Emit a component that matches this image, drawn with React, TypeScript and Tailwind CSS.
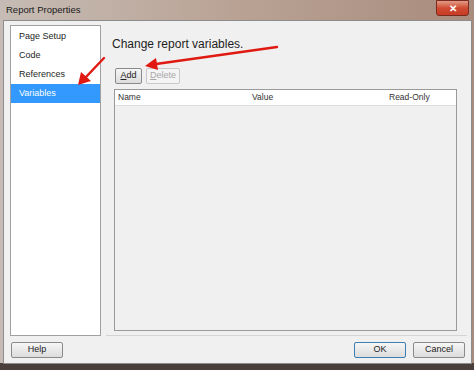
import React from "react";

const font = { fontFamily: '"Liberation Sans", Arial, sans-serif' };

function Btn({ children, className = "", disabled = false }: { children: React.ReactNode; className?: string; disabled?: boolean }) {
  return (
    <div
      className={
        "flex items-center justify-center rounded-[2px] border text-[9px] " +
        (disabled
          ? "border-[#c9c9c9] bg-[#f4f4f4] text-[#a8a8a8] "
          : "border-[#8a8a8a] bg-gradient-to-b from-[#f6f6f6] to-[#dcdcdc] text-[#222] ") +
        className
      }
    >
      {children}
    </div>
  );
}

export default function App() {
  return (
    <div className="relative h-[370px] w-[474px] overflow-hidden bg-[#3a3230]" style={font}>
      {/* glass frame */}
      <div className="absolute inset-0 bg-gradient-to-r from-[#c6bcb5] via-[#b9a294] to-[#a88c7d]" />
      <div className="absolute left-0 top-[363px] h-[7px] w-[474px] bg-[#4a3f3b]" />
      <div className="relative flex h-[364px] w-[472px] flex-col">
        {/* title */}
        <div className="flex h-[20px] items-center justify-between pl-[6px] pr-[3px]">
          <span className="text-[9.5px] text-[#1a1a1a]">Report Properties</span>
          <div className="mb-[4px] flex h-[16px] w-[33px] items-center justify-center self-start rounded-b-[3px] border border-[#7a2a20] bg-gradient-to-b from-[#e29a85] via-[#cf4b32] to-[#c73b24] text-[10px] font-bold text-white">
            ✕
          </div>
        </div>
        {/* body */}
        <div className="ml-[3px] flex flex-1 flex-col border border-[#8c8c8c] bg-[#f0f0f0]">
          <div className="flex flex-1 pl-[6px] pr-[4px] pt-[4px]">
            {/* list */}
            <div className="flex w-[91px] flex-col border border-[#a0a0a0] bg-white pt-[1px] text-[9px] text-[#1e1e1e]">
              <div className="flex h-[19px] items-center pl-[8px]">Page Setup</div>
              <div className="flex h-[19px] items-center pl-[8px]">Code</div>
              <div className="flex h-[19px] items-center pl-[8px]">References</div>
              <div className="flex h-[19px] items-center bg-[#3399ff] pl-[8px] text-white">Variables</div>
            </div>
            {/* right */}
            <div className="flex flex-1 flex-col pl-[5px]">
              <div className="flex flex-1 flex-col pl-[5px] pt-[12px]">
                <div className="pl-[1px] text-[12px] leading-[14px] text-[#1e1e1e]">Change report variables.</div>
                <div className="mt-[17px] flex gap-[4px] pl-[4px]">
                  <Btn className="h-[16px] w-[27px]">
                    <span className="underline">A</span>dd
                  </Btn>
                  <Btn className="h-[16px] w-[34px]" disabled>
                    <span className="underline">D</span>elete
                  </Btn>
                </div>
                <div className="ml-[3px] mr-[10px] mt-[5px] flex flex-1 flex-col border border-[#9a9a9a] bg-[#f0f0f0]">
                  <div className="flex h-[16px] items-center border-b border-[#dedede] bg-white text-[8.5px] text-[#333]">
                    <span className="w-[137px] pl-[3px]">Name</span>
                    <span className="w-[137px]">Value</span>
                    <span>Read-Only</span>
                  </div>
                  <div className="flex-1" />
                </div>
              </div>
              <div className="mt-[4px] h-px bg-[#d4d4d4]" />
            </div>
          </div>
          {/* buttons */}
          <div className="flex items-center justify-between pb-[5px] pl-[7px] pr-[6px] pt-[6px]">
            <Btn className="h-[16px] w-[52px]">Help</Btn>
            <div className="flex gap-[7px]">
              <Btn className="h-[16px] w-[52px] !border-[#3c7fb1]">OK</Btn>
              <Btn className="h-[16px] w-[52px]">Cancel</Btn>
            </div>
          </div>
        </div>
      </div>
      {/* red arrows */}
      <svg className="pointer-events-none absolute left-0 top-0" width="474" height="370">
        <line x1="104" y1="58" x2="86" y2="77" stroke="#e01a12" strokeWidth="2.4" strokeLinecap="round" />
        <polygon points="78,85 81,72 91,81" fill="#e01a12" />
        <line x1="277" y1="47" x2="156" y2="64" stroke="#e01a12" strokeWidth="2.4" strokeLinecap="round" />
        <polygon points="145,66 156,58 158,70" fill="#e01a12" />
      </svg>
    </div>
  );
}
